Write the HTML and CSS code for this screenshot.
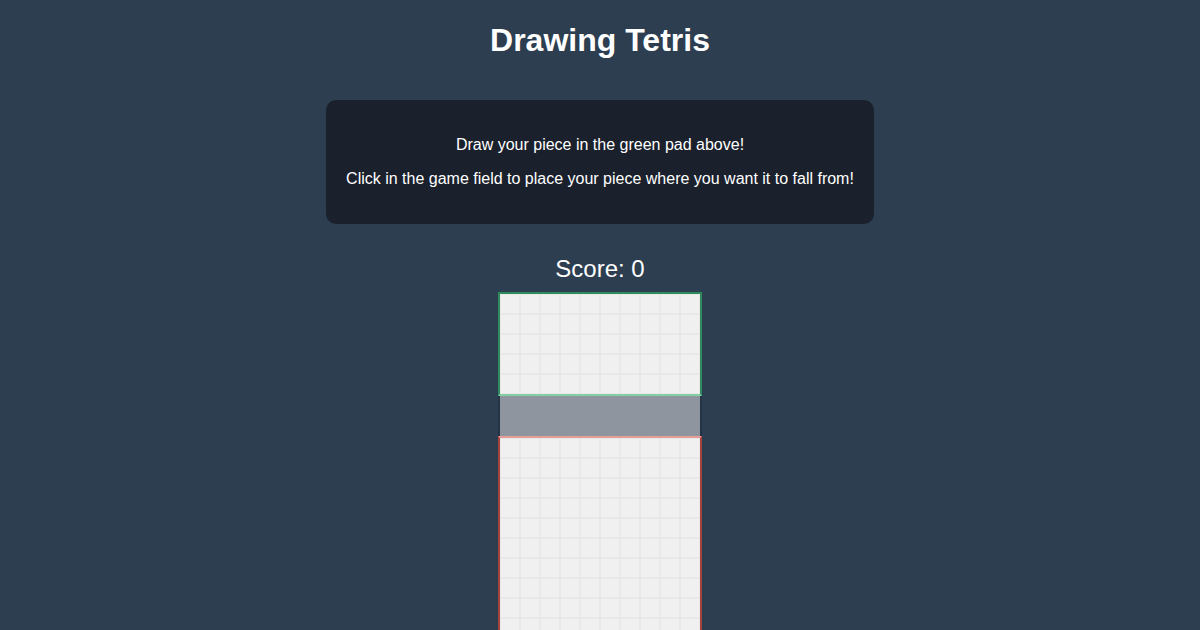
FILE: index.html
```html
<!DOCTYPE html>
<html lang="en">
<head>
    <meta charset="UTF-8">
    <meta name="viewport" content="width=device-width, initial-scale=1.0">
    <title>Drawing Tetris</title>
    <link rel="stylesheet" href="styles.css">
</head>
<body>
    <h1>Drawing Tetris</h1>

    <div class="instructions">
        <p>Draw your piece in the green pad above!</p>
        <p>Click in the game field to place your piece where you want it to fall from!</p>
    </div>

    <div class="score" id="score">Score: 0</div>

    <div class="game-wrap">
        <canvas class="draw-pad" id="drawPad" width="200" height="100"></canvas>
        <div class="drop-zone"></div>
        <canvas class="game-field" id="gameField" width="200" height="400"></canvas>
    </div>
</body>
</html>
```

FILE: styles.css
```css
* {
    box-sizing: content-box;
}

body {
    margin: 0;
    font-family: 'Liberation Sans', Arial, sans-serif;
    background: #2c3e50;
    color: #ffffff;
    display: flex;
    flex-direction: column;
    align-items: center;
}

h1 {
    font-size: 32px;
    margin: 22px 0 41px;
    line-height: 37px;
}

.instructions {
    background: #1a202c;
    border-radius: 10px;
    padding: 20px;
    text-align: center;
    font-size: 16px;
}

.instructions p {
    margin: 16px 0;
    line-height: 18px;
}

.score {
    font-size: 24px;
    line-height: 28px;
    margin: 31px 0 9px;
}

.game-wrap {
    width: 200px;
    display: flex;
    flex-direction: column;
    background: #8e959e;
    border: 2px solid #253444;
    border-top: none;
    border-bottom: none;
}

/* both canvases share the 20px grid */
.draw-pad,
.game-field {
    display: block;
    width: 200px;
    margin: 0 -2px;
    background-color: #f0f0f0;
    background-image:
        linear-gradient(to right, #e8e8e8 0 1px, transparent 1px 19px, #e8e8e8 19px),
        linear-gradient(to bottom, #e8e8e8 0 1px, transparent 1px 19px, #e8e8e8 19px);
    background-size: 20px 20px;
}

.draw-pad {
    height: 100px;
    border: 2px solid #2f8a5c;
    border-bottom-color: #86cfa2;
}

.drop-zone {
    height: 40px;
}

.game-field {
    height: 400px;
    border: 2px solid #a3453c;
    border-top-color: #e59d97;
}
```
